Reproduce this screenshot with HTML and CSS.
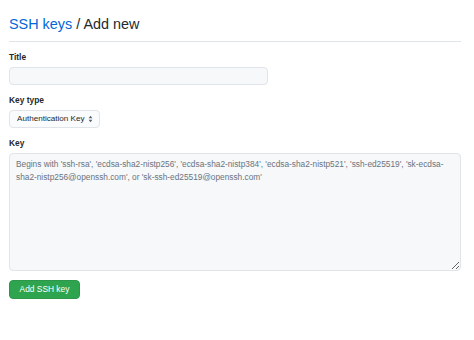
FILE: index.html
```html
<!DOCTYPE html>
<html lang="en">
<head>
<meta charset="utf-8">
<title>SSH keys / Add new</title>
<link rel="stylesheet" href="styles.css">
</head>
<body>
<main class="page">
  <div class="subhead">
    <h2 class="subhead-heading"><a href="#" class="crumb">SSH keys</a> / Add new</h2>
  </div>
  <form class="form">
    <div class="form-group">
      <label class="label" for="title">Title</label>
      <input id="title" class="input input-title" type="text">
    </div>
    <div class="form-group">
      <label class="label">Key type</label>
      <div class="select">
        <span class="select-text">Authentication Key</span>
        <svg class="select-arrow" width="5" height="8" viewBox="0 0 5 8" aria-hidden="true">
          <path d="M2.5 0.8 L4.4 3.2 H0.6 Z" fill="#586069"/>
          <path d="M2.5 7.2 L4.4 4.8 H0.6 Z" fill="#586069"/>
        </svg>
      </div>
    </div>
    <div class="form-group">
      <label class="label" for="key">Key</label>
      <textarea id="key" class="input textarea" placeholder="Begins with 'ssh-rsa', 'ecdsa-sha2-nistp256', 'ecdsa-sha2-nistp384', 'ecdsa-sha2-nistp521', 'ssh-ed25519', 'sk-ecdsa-sha2-nistp256@openssh.com', or 'sk-ssh-ed25519@openssh.com'"></textarea>
    </div>
    <div class="actions">
      <button type="button" class="btn-primary">Add SSH key</button>
    </div>
  </form>
</main>
</body>
</html>
```

FILE: styles.css
```css
html, body {
  margin: 0;
  padding: 0;
  background: #ffffff;
}

body {
  font-family: "Liberation Sans", Arial, sans-serif;
  font-size: 8.4px;
  line-height: 1.5;
  color: #24292e;
}

.page {
  padding: 15px 13px 0 9px;
}

.subhead {
  border-bottom: 1px solid #e1e4e8;
  padding-bottom: 8px;
  margin-bottom: 9px;
}

.subhead-heading {
  margin: 0;
  font-size: 14.4px;
  font-weight: 400;
  line-height: 18px;
  color: #24292e;
}

.crumb {
  color: #0366d6;
  text-decoration: none;
}

.form {
  margin: 0;
}

.form-group {
  display: flex;
  flex-direction: column;
  align-items: flex-start;
  margin-bottom: 9px;
}

.label {
  display: block;
  font-weight: 700;
  font-size: 8.4px;
  line-height: 12px;
  margin-bottom: 4px;
}

.input {
  box-sizing: border-box;
  font-family: inherit;
  font-size: 8.3px;
  line-height: 12.6px;
  color: #24292e;
  background: #f6f8fa;
  border: 1px solid #e1e4e8;
  border-radius: 4px;
  outline: none;
  margin: 0;
}

.input-title {
  width: 259px;
  height: 18px;
  padding: 2px 5px;
}

.select {
  box-sizing: border-box;
  width: 91px;
  height: 18px;
  display: flex;
  align-items: center;
  justify-content: space-between;
  padding: 0 6px 0 7px;
  background: #fafbfc;
  border: 1px solid #e1e4e8;
  border-radius: 4px;
  font-size: 8.1px;
  color: #24292e;
}

.select-arrow {
  display: block;
}

.textarea {
  display: block;
  width: 452px;
  height: 118px;
  padding: 4px 6px;
  resize: vertical;
}

.textarea::placeholder {
  color: #6a737d;
  opacity: 1;
}

.actions {
  display: flex;
}

.btn-primary {
  box-sizing: border-box;
  height: 19px;
  padding: 0 9.6px;
  font-family: inherit;
  font-size: 8.4px;
  font-weight: 400;
  line-height: 17px;
  color: #ffffff;
  background: #2ea44f;
  border: 1px solid #2c974b;
  border-radius: 4px;
  cursor: pointer;
}
```
